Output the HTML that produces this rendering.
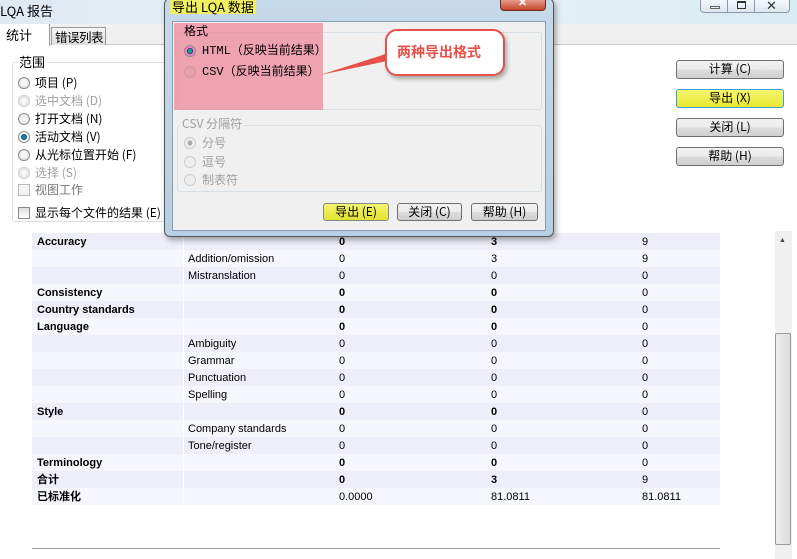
<!DOCTYPE html>
<html><head><meta charset="utf-8"><style>
*{margin:0;padding:0;box-sizing:border-box}
body{width:797px;height:559px;overflow:hidden;background:#fff;font-family:"Liberation Sans","Noto Sans CJK SC",sans-serif;font-size:12px;position:relative;color:#000}
.abs{position:absolute}
.btn{position:absolute;border:1px solid #707070;border-radius:3px;background:linear-gradient(#f2f2f2,#ebebeb 50%,#dddddd 51%,#cfcfcf);text-align:center;font-size:12px;line-height:16px;font-family:"Noto Sans CJK SC",sans-serif}
.radio{position:absolute;width:12px;height:12px;border-radius:50%;border:1px solid #8e8f8f;background:radial-gradient(#fff,#dcdcdc)}
.lbl{position:absolute;font-size:12px;font-family:"Noto Sans CJK SC",sans-serif;line-height:14px}
.dis{color:#a0a0a0}
.row{position:absolute;left:32px;width:688px;height:17px;font-size:11px;line-height:19px}
.row span{position:absolute}
.b{font-weight:bold}
</style></head><body>
<div class="abs" style="left:0;top:0;width:797px;height:24px;background:linear-gradient(90deg,#dfe9f3,#eaf3f8 50%,#d9ebf3)"></div>
<div class="lbl" style="left:0;top:4px;font-size:13px">LQA 报告</div>
<div class="abs" style="left:700px;top:0;width:90px;height:13px;border:1px solid #8a99aa;border-top:none;border-radius:0 0 4px 4px;background:linear-gradient(#f4f8fb,#dce6ef)"></div>
<div class="abs" style="left:727px;top:0;width:1px;height:13px;background:#8a99aa"></div>
<div class="abs" style="left:754px;top:0;width:1px;height:13px;background:#8a99aa"></div>
<div class="abs" style="left:710px;top:6px;width:10px;height:3px;border:1px solid #666"></div>
<div class="abs" style="left:737px;top:1px;width:9px;height:8px;border:1px solid #333;border-top-width:2px"></div>
<div class="lbl" style="left:766px;top:-2px;font-size:13px;color:#333">✕</div>
<div class="abs" style="left:0;top:24px;width:797px;height:21px;background:#f0f0f0;border-bottom:1px solid #c8c8c8"></div>
<div class="abs" style="left:0;top:24px;width:50px;height:22px;background:#fff;border-right:1px solid #999"></div>
<div class="lbl" style="left:6px;top:28px;font-size:13px">统计</div>
<div class="abs" style="left:51px;top:27px;width:55px;height:18px;background:linear-gradient(#f6f6f6,#dedede);border:1px solid #999;border-bottom:none"></div>
<div class="lbl" style="left:55px;top:30px;font-size:12.5px;letter-spacing:-0.5px">错误列表</div>
<div class="abs" style="left:12px;top:62px;width:160px;height:160px;border:1px solid #d5dfe5;border-radius:3px"></div>
<div class="lbl" style="left:17px;top:55px;background:#fff;padding:0 2px;font-size:13px">范围</div>
<div class="radio" style="left:18px;top:77px"></div><div class="lbl" style="left:35px;top:76px">项目 (P)</div>
<div class="radio" style="left:18px;top:95px;border-color:#ccc"></div><div class="lbl dis" style="left:35px;top:94px">选中文档 (D)</div>
<div class="radio" style="left:18px;top:113px"></div><div class="lbl" style="left:35px;top:112px">打开文档 (N)</div>
<div class="radio" style="left:18px;top:131px;background:radial-gradient(#1a7fb5 25%,#0b4c7a 40%,#fff 45%,#ddd)"></div><div class="lbl" style="left:35px;top:130px">活动文档 (V)</div>
<div class="radio" style="left:18px;top:149px"></div><div class="lbl" style="left:35px;top:148px">从光标位置开始 (F)</div>
<div class="radio" style="left:18px;top:167px;border-color:#ccc"></div><div class="lbl dis" style="left:35px;top:166px">选择 (S)</div>
<div class="abs" style="left:18px;top:184px;width:12px;height:12px;border:1px solid #bbb;background:#f4f4f4"></div><div class="lbl dis" style="left:35px;top:183px;color:#777">视图工作</div>
<div class="abs" style="left:18px;top:207px;width:12px;height:12px;border:1px solid #888;background:linear-gradient(#ddd,#fff)"></div><div class="lbl" style="left:35px;top:206px">显示每个文件的结果 (E)</div>
<div class="btn" style="left:676px;top:60px;width:108px;height:19px">计算 (C)</div>
<div class="btn" style="left:676px;top:89px;width:108px;height:19px;background:linear-gradient(#f6f670,#e8e830);border-color:#3c9fd5">导出 (X)</div>
<div class="btn" style="left:676px;top:118px;width:108px;height:19px">关闭 (L)</div>
<div class="btn" style="left:676px;top:147px;width:108px;height:19px">帮助 (H)</div>
<div id="tbl"></div>
<div class="abs" style="left:32px;top:548px;width:688px;height:1px;background:#a0a0a0"></div>
<div class="abs" style="left:775px;top:231px;width:17px;height:328px;background:#f0f0f0"></div>
<div class="abs" style="left:779px;top:237px;font-size:7px;color:#444">▲</div>
<div class="abs" style="left:775px;top:333px;width:16px;height:212px;border:1px solid #999;border-radius:2px;background:linear-gradient(90deg,#eee,#ddd)"></div>
<div class="abs" style="left:164px;top:-2px;width:390px;height:239px;border:1px solid #555;border-radius:6px;background:linear-gradient(#c5d9ea,#b7cfe3);box-shadow:2px 3px 6px rgba(0,0,0,.35)"></div>
<div class="abs" style="left:170px;top:0;width:86px;height:14px;background:#f0f060"></div>
<div class="lbl" style="left:172px;top:0px;font-size:13px">导出 LQA 数据</div>
<div class="abs" style="left:500px;top:-2px;width:46px;height:13px;border:1px solid #6b2a20;border-radius:0 0 4px 4px;background:linear-gradient(#e7a393,#c8452b)"></div>
<div class="abs" style="left:518px;top:-4px;color:#fff;font-size:11px;font-weight:bold">✕</div>
<div class="abs" style="left:172px;top:21px;width:374px;height:210px;background:#f0f0f0;border:1px solid #8b9db0"></div>
<div class="abs" style="left:177px;top:32px;width:365px;height:78px;border:1px solid #d5dfe5;border-radius:3px"></div>
<div class="abs" style="left:177px;top:125px;width:365px;height:67px;border:1px solid #d5dfe5;border-radius:3px"></div>
<div class="abs" style="left:174px;top:23px;width:149px;height:87px;background:rgba(238,130,150,.7)"></div>
<div class="lbl" style="left:184px;top:24px">格式</div>
<div class="radio" style="left:184px;top:45px;background:radial-gradient(#1a9a90 25%,#0b4c4a 40%,#f6c 45%,#eaa)"></div><div class="lbl" style="left:202px;top:44px;font-family:'Liberation Mono','Noto Sans CJK SC',monospace">HTML（反映当前结果）</div>
<div class="radio" style="left:184px;top:66px;border-color:#c99;background:#e8a0a8"></div><div class="lbl" style="left:202px;top:65px;font-family:'Liberation Mono','Noto Sans CJK SC',monospace">CSV（反映当前结果）</div>
<div class="lbl dis" style="left:180px;top:117px;background:#f0f0f0;padding:0 2px">CSV 分隔符</div>
<div class="radio" style="left:184px;top:137px;border-color:#ccc;background:radial-gradient(#aaa 30%,#eee 40%)"></div><div class="lbl dis" style="left:202px;top:136px">分号</div>
<div class="radio" style="left:184px;top:156px;border-color:#ccc;background:#eee"></div><div class="lbl dis" style="left:202px;top:155px">逗号</div>
<div class="radio" style="left:184px;top:174px;border-color:#ccc;background:#eee"></div><div class="lbl dis" style="left:202px;top:173px">制表符</div>
<div class="btn" style="left:323px;top:203px;width:66px;height:18px;background:linear-gradient(#f6f670,#e2e230);border-color:#888">导出 (E)</div>
<div class="btn" style="left:397px;top:203px;width:65px;height:18px">关闭 (C)</div>
<div class="btn" style="left:471px;top:203px;width:67px;height:18px">帮助 (H)</div>
<svg class="abs" style="left:0;top:0" width="797" height="559"><polygon points="320,75 392,52 392,60" fill="#e8504a"/></svg>
<div class="abs" style="left:385px;top:29px;width:120px;height:47px;border:2px solid #e8504a;border-radius:12px;background:#fff;box-shadow:2px 3px 4px rgba(0,0,0,.3)"></div>
<div class="lbl" style="left:397px;top:45px;color:#e8504a;font-weight:bold;font-size:14px">两种导出格式</div>
<script>
var rows=[["Accuracy","","0","3","9",1],["","Addition/omission","0","3","9",0],["","Mistranslation","0","0","0",0],["Consistency","","0","0","0",1],["Country standards","","0","0","0",1],["Language","","0","0","0",1],["","Ambiguity","0","0","0",0],["","Grammar","0","0","0",0],["","Punctuation","0","0","0",0],["","Spelling","0","0","0",0],["Style","","0","0","0",1],["","Company standards","0","0","0",0],["","Tone/register","0","0","0",0],["Terminology","","0","0","0",1],["合计","","0","3","9",1],["已标准化","","0.0000","81.0811","81.0811",2]];
var h="";rows.forEach(function(r,i){var bg=(i%2==0)?"#eeeefa":"#f6f6fe";var b=r[5]?"b":"";var nb=r[5]==1?"b":"";
h+='<div class="row" style="top:'+(233+i*17)+'px;background:'+bg+'"><div class="abs" style="left:151px;top:0;width:1px;height:17px;background:#fff"></div><span class="'+b+'" style="left:5px">'+r[0]+'</span><span style="left:156px">'+r[1]+'</span><span class="'+nb+'" style="left:307px">'+r[2]+'</span><span class="'+nb+'" style="left:459px">'+r[3]+'</span><span style="left:610px">'+r[4]+'</span></div>';});
document.getElementById("tbl").innerHTML=h;
</script>
</body></html>
